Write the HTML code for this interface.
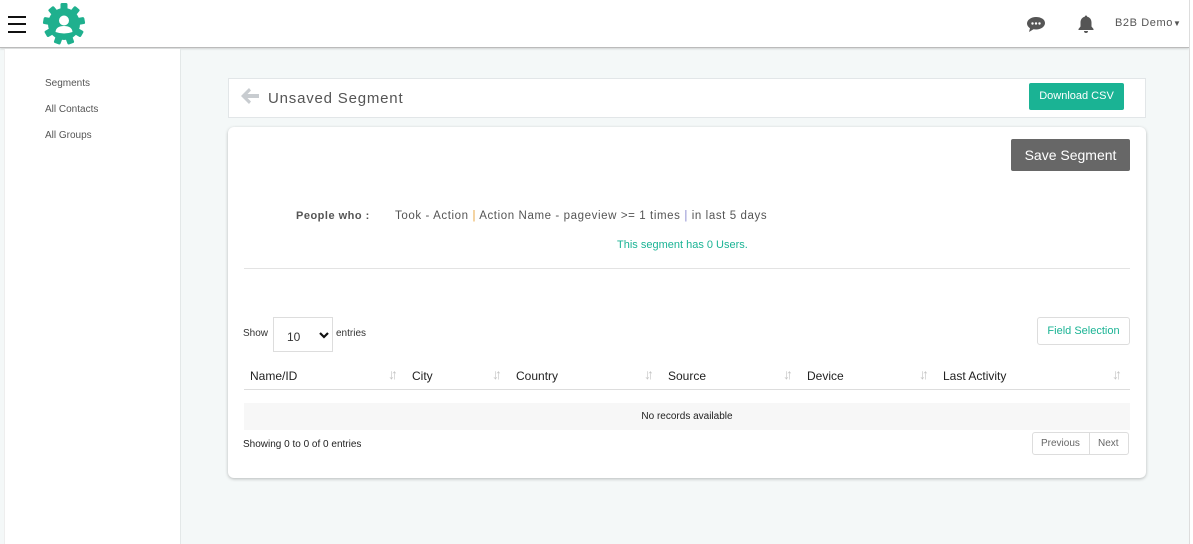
<!DOCTYPE html>
<html><head><style>
*{box-sizing:border-box;margin:0;padding:0}
body{width:1193px;height:544px;overflow:hidden;background:#f4f8f8;font-family:"Liberation Sans",sans-serif;position:relative;color:#333}
.top{position:absolute;left:0;top:0;width:1189px;height:48px;background:#fff;border-bottom:1px solid #bbb;box-shadow:0 1px 2px rgba(0,0,0,.15)}
.rstrip{position:absolute;right:0;top:0;width:4px;height:544px;background:#fff;border-left:1px solid #ddd}
.side{position:absolute;left:4px;top:49px;width:177px;height:495px;background:#fff;border-right:1px solid #e3e8e8;border-left:1px solid #eee}
.side div{position:absolute;left:40px;font-size:10px;color:#555}
.a{position:absolute}
.card1{left:228px;top:78px;width:918px;height:40px;background:#fff;border:1px solid #e2e6e8}
.card2{left:228px;top:127px;width:918px;height:351px;background:#fff;border-radius:6px;box-shadow:0 1px 3px rgba(0,0,0,.25)}
.btn{position:absolute;color:#fff;border-radius:2px;text-align:center}
.th{position:absolute;top:369px;font-size:12px;color:#222}
.sort{position:absolute;top:366px;font-size:14px;color:#c4c4c4;letter-spacing:-4px}
</style></head><body>
<div class="top">
 <div class="a" style="left:8px;top:16px;width:18px;height:2px;background:#111"></div>
 <div class="a" style="left:8px;top:23px;width:18px;height:2px;background:#111"></div>
 <div class="a" style="left:8px;top:31px;width:18px;height:2px;background:#111"></div>
 <svg class="a" style="left:42px;top:2px" width="44" height="44" viewBox="0 0 44 44">
  <g fill="#1fb08e" transform="translate(22,22)">
   <circle r="16"/>
   <g id="t"><rect x="-3.5" y="-21" width="7" height="8" rx="1.5"/></g>
   <use href="#t" transform="rotate(40)"/><use href="#t" transform="rotate(80)"/><use href="#t" transform="rotate(120)"/>
   <use href="#t" transform="rotate(160)"/><use href="#t" transform="rotate(200)"/><use href="#t" transform="rotate(240)"/><use href="#t" transform="rotate(280)"/><use href="#t" transform="rotate(320)"/>
  </g>
  <circle cx="22" cy="18.5" r="5" fill="#fff"/>
  <path d="M13.5 30 Q14 24 22 24 Q30 24 30.5 30 Q22 33 13.5 30 Z" fill="#fff"/>
 </svg>
 <svg class="a" style="left:1026px;top:16px" width="20" height="18" viewBox="0 0 20 18"><path d="M10 1C5 1 1 4 1 7.5c0 2 1.2 3.6 3 4.7L3 16l4.5-2.7c.8.2 1.6.2 2.5.2 5 0 9-2.9 9-6.5S15 1 10 1z" fill="#555"/><circle cx="6.5" cy="7.5" r="1.2" fill="#fff"/><circle cx="10" cy="7.5" r="1.2" fill="#fff"/><circle cx="13.5" cy="7.5" r="1.2" fill="#fff"/></svg>
 <svg class="a" style="left:1076px;top:14px" width="20" height="20" viewBox="0 0 20 20"><path d="M10 1.5c-.8 0-1.2.6-1.2 1.2C6 3.3 4.5 5.6 4.5 8.5v4L2.5 15v1h15v-1l-2-2.5v-4c0-2.9-1.5-5.2-4.3-5.8 0-.6-.4-1.2-1.2-1.2z M8 17a2 2 0 0 0 4 0z" fill="#555"/></svg>
 <div class="a" style="left:1115px;top:17px;font-size:11px;color:#555;letter-spacing:.6px">B2B Demo<span style="font-size:8px">&#9660;</span></div>
</div>
<div class="rstrip"></div>
<div class="side">
 <div style="top:29px">Segments</div>
 <div style="top:55px">All Contacts</div>
 <div style="top:81px">All Groups</div>
</div>
<div class="a card1">
 <svg class="a" style="left:11px;top:8px" width="20" height="18" viewBox="0 0 20 18"><path d="M9 1 L1 9 L9 17 L11 14.5 L7.5 11 H19 V7 H7.5 L11 3.5 Z" fill="#c8ccd0"/></svg>
 <div class="a" style="left:39px;top:11px;font-size:15px;color:#555;letter-spacing:.8px">Unsaved Segment</div>
 <div class="btn" style="left:800px;top:4px;width:95px;height:27px;background:#1ab394;font-size:11px;line-height:27px">Download CSV</div>
</div>
<div class="a card2">
 <div class="btn" style="left:783px;top:12px;width:119px;height:32px;background:#676767;font-size:14px;line-height:32px">Save Segment</div>
 <div class="a" style="left:68px;top:83px;font-size:11px;font-weight:bold;color:#555;letter-spacing:.5px">People who :</div>
 <div class="a" style="left:167px;top:83px;font-size:11.5px;color:#555;letter-spacing:.6px">Took - Action <span style="color:#e8a33c">|</span> Action Name - pageview &gt;= 1 times <span style="color:#8c8cd0">|</span> in last 5 days</div>
 <div class="a" style="left:389px;top:112px;font-size:11px;color:#1ab394">This segment has 0 Users.</div>
 <div class="a" style="left:16px;top:141px;width:886px;height:1px;background:#e3e3e3"></div>
 <div class="a" style="left:15px;top:201px;font-size:10px">Show</div>
 <div class="a" style="left:45px;top:190px;width:60px;height:35px;border:1px solid #ddd;font-size:12px;padding:12px 0 0 13px">10<svg style="position:absolute;left:45px;top:14px" width="10" height="7" viewBox="0 0 10 7"><path d="M1 1 L5 5 L9 1" stroke="#111" stroke-width="2.2" fill="none"/></svg></div>
 <div class="a" style="left:108px;top:201px;font-size:10px">entries</div>
 <div class="a" style="left:809px;top:190px;width:93px;height:28px;border:1px solid #ddd;border-radius:3px;font-size:11px;color:#1ab394;text-align:center;line-height:26px">Field Selection</div>
 <div class="a" style="left:16px;top:262px;width:886px;height:1px;background:#ddd"></div>
 <div class="a" style="left:16px;top:276px;width:886px;height:27px;background:#f7f7f7;font-size:10px;text-align:center;line-height:27px;color:#222">No records available</div>
 <div class="a" style="left:15px;top:312px;font-size:10px;color:#222">Showing 0 to 0 of 0 entries</div>
 <div class="a" style="left:804px;top:305px;width:97px;height:23px;border:1px solid #ddd;border-radius:3px;font-size:10px;color:#666;line-height:21px">
  <span style="position:absolute;left:8px">Previous</span><span style="position:absolute;left:56px;top:0;width:1px;height:21px;background:#ddd"></span><span style="position:absolute;left:65px">Next</span></div>
</div>
<div class="th" style="left:250px">Name/ID</div><div class="sort" style="left:388px">↓↑</div>
<div class="th" style="left:412px">City</div><div class="sort" style="left:492px">↓↑</div>
<div class="th" style="left:516px">Country</div><div class="sort" style="left:644px">↓↑</div>
<div class="th" style="left:668px">Source</div><div class="sort" style="left:783px">↓↑</div>
<div class="th" style="left:807px">Device</div><div class="sort" style="left:919px">↓↑</div>
<div class="th" style="left:943px">Last Activity</div><div class="sort" style="left:1112px">↓↑</div>
</body></html>
